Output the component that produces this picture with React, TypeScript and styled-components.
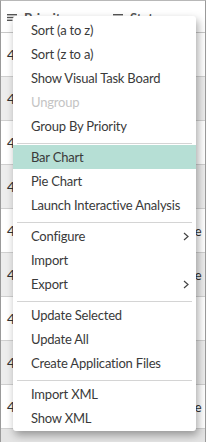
import React from "react";
import styled, { createGlobalStyle } from "styled-components";

const GlobalStyle = createGlobalStyle`
  html, body {
    margin: 0;
    padding: 0;
    background: #ffffff;
  }
  body {
    font-family: "Lato", "Noto Sans", sans-serif;
    color: #333333;
  }
`;

type Row = { priority: string; state: string };

const rows: Row[] = [
  { priority: "4", state: "Defined" },
  { priority: "4", state: "Defined" },
  { priority: "4", state: "Open" },
  { priority: "4", state: "Defined" },
  { priority: "4", state: "Code Complete" },
  { priority: "4", state: "Code Complete" },
  { priority: "4", state: "Defined" },
  { priority: "4", state: "Open" },
  { priority: "4", state: "Code Complete" },
];

type Entry =
  | { kind: "item"; label: string; disabled?: boolean; active?: boolean; submenu?: boolean }
  | { kind: "sep" };

const menu: Entry[] = [
  { kind: "item", label: "Sort (a to z)" },
  { kind: "item", label: "Sort (z to a)" },
  { kind: "item", label: "Show Visual Task Board" },
  { kind: "item", label: "Ungroup", disabled: true },
  { kind: "item", label: "Group By Priority" },
  { kind: "sep" },
  { kind: "item", label: "Bar Chart", active: true },
  { kind: "item", label: "Pie Chart" },
  { kind: "item", label: "Launch Interactive Analysis" },
  { kind: "sep" },
  { kind: "item", label: "Configure", submenu: true },
  { kind: "item", label: "Import" },
  { kind: "item", label: "Export", submenu: true },
  { kind: "sep" },
  { kind: "item", label: "Update Selected" },
  { kind: "item", label: "Update All" },
  { kind: "item", label: "Create Application Files" },
  { kind: "sep" },
  { kind: "item", label: "Import XML" },
  { kind: "item", label: "Show XML" },
];

function LinesIcon() {
  return (
    <svg width="10" height="7" viewBox="0 0 10 7">
      <rect x="0" y="0" width="10" height="1.4" fill="#555" />
      <rect x="0" y="2.8" width="8" height="1.4" fill="#555" />
      <rect x="0" y="5.6" width="5.5" height="1.4" fill="#555" />
    </svg>
  );
}

function Chevron() {
  return (
    <svg width="6" height="9" viewBox="0 0 6 9">
      <polyline points="1,1 5,4.5 1,8" fill="none" stroke="#444" strokeWidth="1.2" />
    </svg>
  );
}

export default function App() {
  return (
    <>
      <GlobalStyle />
      <Frame>
        <Grid>
          <HeaderRow>
            <HeaderCell>
              <LinesIcon />
              <span>Priority</span>
            </HeaderCell>
            <HeaderCell>
              <LinesIcon />
              <span>State</span>
            </HeaderCell>
          </HeaderRow>
          {rows.map((r, i) => (
            <BodyRow key={i} $odd={i % 2 === 1}>
              <Cell>{r.priority}</Cell>
              <Cell $small>{r.state}</Cell>
            </BodyRow>
          ))}
          <Footer />
        </Grid>

        <Menu>
          {menu.map((e, i) =>
            e.kind === "sep" ? (
              <Separator key={i} />
            ) : (
              <MenuItem key={i} $disabled={e.disabled} $active={e.active}>
                <span>{e.label}</span>
                {e.submenu && <Chevron />}
              </MenuItem>
            )
          )}
        </Menu>
      </Frame>
    </>
  );
}

const Frame = styled.div`
  position: relative;
  width: 207px;
  height: 442px;
  overflow: hidden;
`;

const Grid = styled.div`
  width: 206px;
  height: 442px;
  box-sizing: border-box;
  border-top: 1px solid #b8b8b8;
  border-left: 1px solid #9a9a9a;
  border-right: 1px solid #9a9a9a;
  display: flex;
  flex-direction: column;
`;

const HeaderRow = styled.div`
  display: grid;
  grid-template-columns: 106px 1fr;
  height: 31px;
  border-bottom: 1px solid #c8c8c8;
  background: #ffffff;
`;

const HeaderCell = styled.div`
  display: flex;
  align-items: center;
  gap: 7px;
  padding-left: 6px;
  padding-top: 2px;
  font-size: 13px;
  font-weight: 700;
  color: #555555;
`;

const BodyRow = styled.div<{ $odd: boolean }>`
  display: grid;
  grid-template-columns: 106px 1fr;
  height: 43px;
  border-bottom: 1px solid #d0d0d0;
  background: ${(p) => (p.$odd ? "#ededed" : "#ffffff")};
`;

const Cell = styled.div<{ $small?: boolean }>`
  display: flex;
  align-items: center;
  padding-left: 6px;
  font-size: ${(p) => (p.$small ? "13px" : "14px")};
  color: #333333;
  white-space: nowrap;
  overflow: hidden;
`;

const Footer = styled.div`
  flex: 1;
  background: #e4e4e4;
`;

const Menu = styled.div`
  position: absolute;
  left: 13px;
  top: 16px;
  width: 183px;
  padding: 2px 0 1px;
  background: #ffffff;
  border-radius: 3px;
  box-shadow: 2px 4px 9px rgba(0, 0, 0, 0.35);
`;

const MenuItem = styled.div<{ $disabled?: boolean; $active?: boolean }>`
  display: flex;
  align-items: center;
  justify-content: space-between;
  height: 24px;
  padding: 0 7px 0 18px;
  font-size: 13px;
  letter-spacing: -0.2px;
  white-space: nowrap;
  color: ${(p) => (p.$disabled ? "#c4c4c4" : "#3a3a3a")};
  background: ${(p) => (p.$active ? "#b6dfd5" : "transparent")};
`;

const Separator = styled.div`
  height: 1px;
  margin: 5px 4px 1px;
  background: #d4d4d4;
`;
